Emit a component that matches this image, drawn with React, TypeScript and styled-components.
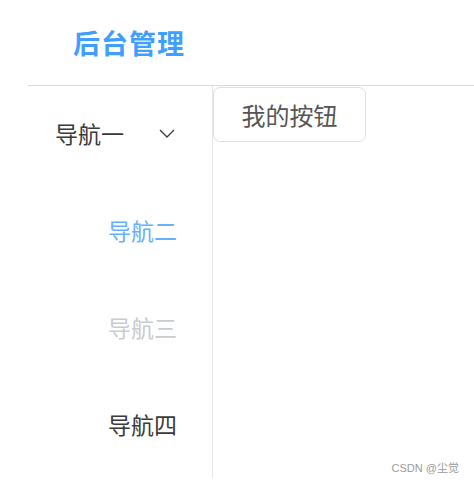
import styled, { createGlobalStyle } from "styled-components";

const GlobalStyle = createGlobalStyle`
  html, body {
    margin: 0;
    padding: 0;
    background: #fff;
    font-family: "Liberation Sans", "Noto Sans CJK SC", sans-serif;
  }
`;

// Styled Components
const Page = styled.div`
  position: relative;
  width: 474px;
  height: 483px;
  padding-left: 28px;
  box-sizing: border-box;
  overflow: hidden;
`;

const Header = styled.header`
  display: flex;
  align-items: center;
  height: 86px;
  padding-left: 45px;
  border-bottom: 1px solid #d9d9d9;
  box-sizing: border-box;
`;

const Title = styled.h1`
  margin: 0;
  font-family: "Noto Sans CJK SC", sans-serif;
  font-size: 27px;
  font-weight: 600;
  color: #409eff;
  letter-spacing: 1px;
`;

const Body = styled.div`
  display: flex;
  align-items: flex-start;
`;

const Aside = styled.aside`
  width: 185px;
  height: 392px;
  border-right: 1px solid #e6e6e6;
  box-sizing: border-box;
  display: flex;
  flex-direction: column;
`;

const MenuItem = styled.div<{ tone: "normal" | "active" | "disabled" }>`
  height: 97px;
  display: flex;
  align-items: center;
  justify-content: flex-end;
  padding: 0 35px 4px 0;
  box-sizing: border-box;
  font-family: "Noto Sans CJK SC", sans-serif;
  font-size: 23px;
  color: ${(p) =>
    p.tone === "active" ? "#66b1ff" : p.tone === "disabled" ? "#c8cbd0" : "#3a3a3a"};
`;

const SubMenuTitle = styled.div`
  height: 97px;
  display: flex;
  align-items: center;
  padding: 0 0 4px 27px;
  box-sizing: border-box;
  gap: 35px;
  font-family: "Noto Sans CJK SC", sans-serif;
  font-size: 23px;
  color: #3a3a3a;
`;

const Chevron = styled.svg`
  width: 16px;
  height: 9px;
  margin-top: 2px;
`;

const Main = styled.main`
  flex: 1;
  padding-top: 1px;
`;

const Button = styled.button`
  width: 153px;
  height: 55px;
  background: #fff;
  border: 1px solid #dcdfe6;
  border-radius: 7px;
  font-family: "Noto Sans CJK SC", sans-serif;
  font-size: 24px;
  color: #555;
  cursor: pointer;
  padding: 0;
`;

const Watermark = styled.div`
  position: absolute;
  right: 15px;
  bottom: 8px;
  font-family: "Liberation Sans", "Noto Sans CJK SC", sans-serif;
  font-size: 11px;
  color: #9a9a9a;
`;

const App = () => {
  return (
    <>
      <GlobalStyle />
      <Page>
        <Header>
          <Title>后台管理</Title>
        </Header>
        <Body>
          <Aside>
            <SubMenuTitle>
              <span>导航一</span>
              <Chevron viewBox="0 0 16 9">
                <path d="M1 1 L8 8 L15 1" fill="none" stroke="#3a3a3a" strokeWidth="1.3" />
              </Chevron>
            </SubMenuTitle>
            <MenuItem tone="active">导航二</MenuItem>
            <MenuItem tone="disabled">导航三</MenuItem>
            <MenuItem tone="normal">导航四</MenuItem>
          </Aside>
          <Main>
            <Button>我的按钮</Button>
          </Main>
        </Body>
        <Watermark>CSDN @尘觉</Watermark>
      </Page>
    </>
  );
};

export default App;
